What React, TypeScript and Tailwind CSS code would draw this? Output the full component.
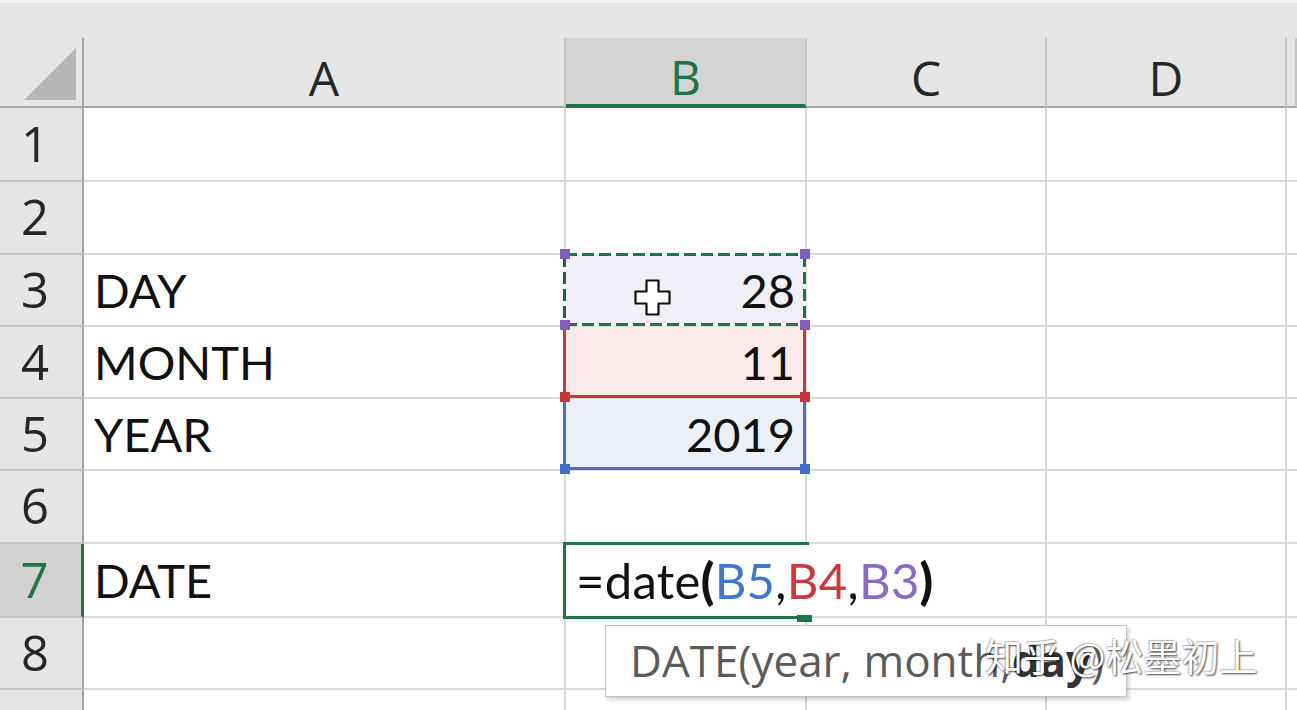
import React from "react";

const cellFont = "[font-family:'Lato','Liberation_Sans',sans-serif]";
const uiFont = "[font-family:'Open_Sans','Noto_Sans',sans-serif]";

const rowLabels = ["1", "2", "3", "4", "5", "6", "7", "8", ""];

function RowHeader({ label, active }: { label: string; active?: boolean }) {
  return (
    <div
      className={
        "flex items-center justify-center border-b-2 border-b-[#c4c4c4] text-[49px] leading-none " +
        uiFont +
        (active
          ? " bg-[#d2d2d2] text-[#217346] border-r-[3px] border-r-[#217346]"
          : " bg-[#e6e6e6] text-[#262626] border-r-2 border-r-[#a3a3a3]")
      }
    >
      <span className="pr-[12px] pb-[2px]">{label}</span>
    </div>
  );
}

function Cell({
  children,
  right,
  className = "",
}: {
  children?: React.ReactNode;
  right?: boolean;
  className?: string;
}) {
  return (
    <div
      className={
        "relative flex items-center border-r-2 border-b-2 border-[#d9d9d9] text-[47px] leading-none text-[#111] " +
        cellFont +
        (right ? " justify-end pr-[10px]" : " pl-[10px]") +
        " " +
        className
      }
    >
      {children}
    </div>
  );
}

function Sq({ c, pos }: { c: string; pos: string }) {
  return <div className={"absolute w-[10px] h-[10px] z-20 " + c + " " + pos} />;
}

function CrossCursor() {
  return (
    <svg
      className="absolute left-[68px] top-[24px] z-30"
      width="37"
      height="37"
      viewBox="0 0 37 37"
    >
      <path
        d="M12.5 1.5h12v11h11v12h-11v11h-12v-11h-11v-12h11z"
        fill="#fff"
        stroke="#111"
        strokeWidth="2.2"
        strokeLinejoin="round"
      />
    </svg>
  );
}

export default function App() {
  return (
    <div className="relative w-[1297px] h-[710px] overflow-hidden bg-white">
      <div className="h-[38px] bg-[#e6e6e6] border-t-[3px] border-t-[#f3f3f3]" />
      <div className="grid grid-cols-[84px_482px_241px_240px_240px_10px] grid-rows-[70px_74px_73px_72px_72px_72px_73px_74px_72px_40px]">
        {/* header row */}
        <div className="relative bg-[#e6e6e6] border-r-2 border-r-[#a3a3a3] border-b-2 border-b-[#a6a6a6]">
          <svg className="absolute left-[24px] top-[10px]" width="52" height="52" viewBox="0 0 52 52">
            <polygon points="52,0 52,52 0,52" fill="#b6b6b6" />
          </svg>
        </div>
        {["A", "B", "C", "D", ""].map((h) => (
          <div
            key={h || "e"}
            className={
              "flex items-center justify-center text-[48px] leading-none " +
              uiFont +
              (h === "B"
                ? " bg-[#d4d4d4] text-[#217346] border-r-2 border-r-[#c8c8c8] border-b-4 border-b-[#217346]"
                : " bg-[#e6e6e6] text-[#262626] border-r-2 border-r-[#c4c4c4] border-b-2 border-b-[#a6a6a6]")
            }
          >
            <span className="pt-[12px]">{h}</span>
          </div>
        ))}

        {rowLabels.map((r, i) => {
          const n = i + 1;
          let a: React.ReactNode = null;
          if (n === 3) a = "DAY";
          if (n === 4) a = "MONTH";
          if (n === 5) a = "YEAR";
          if (n === 7) a = "DATE";
          let b: React.ReactNode = null;
          if (n === 3)
            b = (
              <Cell right className="bg-[#f0eef7]">
                <CrossCursor />
                <span className="relative z-10">28</span>
                <div className="absolute left-[-1px] top-[-2px] w-[242px] h-[3px] z-10 bg-[repeating-linear-gradient(90deg,#217346_0_12px,#ffffff_12px_17px)]" />
                <div className="absolute left-[-1px] bottom-[-1px] w-[242px] h-[3px] z-10 bg-[repeating-linear-gradient(90deg,#217346_0_12px,#ffffff_12px_17px)]" />
                <div className="absolute left-[-3px] top-0 w-[3px] h-[72px] z-10 bg-[repeating-linear-gradient(180deg,#2f5a45_0_12px,#ffffff_12px_17px)]" />
                <div className="absolute right-[-1px] top-0 w-[3px] h-[72px] z-10 bg-[repeating-linear-gradient(180deg,#217346_0_12px,#ffffff_12px_17px)]" />
                <Sq c="bg-[#7f5fb8]" pos="left-[-6px] top-[-6px]" />
                <Sq c="bg-[#7f5fb8]" pos="right-[-5px] top-[-6px]" />
                <Sq c="bg-[#7f5fb8]" pos="left-[-6px] bottom-[-5px]" />
                <Sq c="bg-[#7f5fb8]" pos="right-[-5px] bottom-[-5px]" />
              </Cell>
            );
          else if (n === 4)
            b = (
              <Cell right className="bg-[#fbeaea]">
                <span>11</span>
                <div className="absolute left-[-3px] top-0 w-[3px] h-full bg-[#c23b3e]" />
                <div className="absolute right-[-1px] top-0 w-[3px] h-full bg-[#c23b3e]" />
                <div className="absolute left-[-1px] bottom-[-1px] w-[242px] h-[3px] bg-[#c23b3e]" />
                <Sq c="bg-[#c9353a]" pos="left-[-6px] bottom-[-5px]" />
                <Sq c="bg-[#c9353a]" pos="right-[-5px] bottom-[-5px]" />
              </Cell>
            );
          else if (n === 5)
            b = (
              <Cell right className="bg-[#eaeff8]">
                <span>2019</span>
                <div className="absolute left-[-3px] top-0 w-[3px] h-full bg-[#4670bd]" />
                <div className="absolute right-[-1px] top-0 w-[3px] h-full bg-[#4670bd]" />
                <div className="absolute left-[-1px] bottom-[-1px] w-[242px] h-[3px] bg-[#4670bd]" />
                <Sq c="bg-[#3f6fc8]" pos="left-[-6px] bottom-[-5px]" />
                <Sq c="bg-[#3f6fc8]" pos="right-[-5px] bottom-[-5px]" />
              </Cell>
            );
          else if (n === 7)
            b = (
              <Cell className="border-r-transparent border-r-0 z-20 overflow-visible">
                <span className="whitespace-nowrap relative z-10 text-[#111] text-[49px] tracking-[0.3px]">
                  =date<b className="font-black">(</b>
                  <span className="text-[#3f78c9]">B5</span>,
                  <span className="text-[#c83a3e]">B4</span>,
                  <span className="text-[#8a6bc2]">B3</span>
                  <b className="font-black">)</b>
                </span>
                <div className="absolute left-[-3px] top-[-2px] w-[246px] h-[3px] bg-[#217346]" />
                <div className="absolute left-[-3px] top-[-2px] w-[3px] h-[76px] bg-[#217346]" />
                <div className="absolute left-[-3px] bottom-[-3px] w-[234px] h-[3px] bg-[#217346]" />
                <div className="absolute left-[231px] bottom-[-6px] w-[15px] h-[7px] bg-[#217346]" />
              </Cell>
            );
          else b = <Cell />;
          return (
            <React.Fragment key={n}>
              <RowHeader label={r} active={n === 7} />
              <Cell>{a}</Cell>
              {b}
              <Cell />
              <Cell />
              <Cell />
            </React.Fragment>
          );
        })}
      </div>

      {/* function tooltip */}
      <div
        className={
          "absolute left-[605px] top-[625px] w-[522px] h-[72px] z-40 bg-white border border-[#c3c3c3] shadow-[2px_3px_4px_rgba(0,0,0,0.18)] flex items-center pl-[24px] pb-[2px] text-[44px] leading-none text-[#5b5b5b] whitespace-nowrap " +
          uiFont
        }
      >
        DATE(year, month, <b className="font-bold text-[#333]">day</b>)
      </div>

      {/* watermark */}
      <div className="absolute left-[985px] top-[636px] z-50 text-[38px] leading-none text-white whitespace-nowrap [font-family:'Noto_Sans_CJK_SC','Noto_Sans',sans-serif] [text-shadow:1px_1px_2px_rgba(0,0,0,0.75),-1px_-1px_1px_rgba(0,0,0,0.25)]">
        知乎 @松墨初上
      </div>
    </div>
  );
}
